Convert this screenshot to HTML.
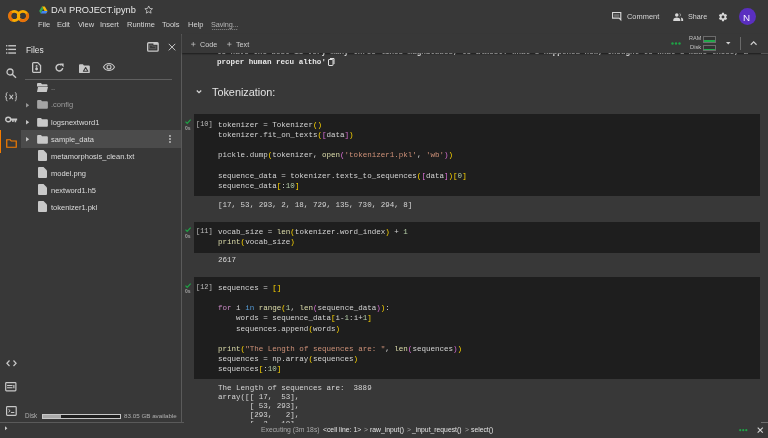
<!DOCTYPE html>
<html><head><meta charset="utf-8">
<style>
*{margin:0;padding:0;box-sizing:border-box}
html,body{width:768px;height:438px;overflow:hidden;background:#383838}
body{position:relative;font-family:"Liberation Sans",sans-serif;color:#e3e3e3}
.a,.code,.out,.pr{will-change:transform}
.a{position:absolute;white-space:pre;line-height:1}
svg{position:absolute;overflow:visible}
.menu{font-size:7.5px;color:#d6d6d6;top:21px}
.cell{position:absolute;left:194px;width:566px;background:#1e1e1e}
.code{position:absolute;left:218.2px;font-family:"Liberation Mono",monospace;font-size:7.54px;line-height:10.13px;color:#d4d4d4;white-space:pre}
.out{position:absolute;left:218.2px;font-family:"Liberation Mono",monospace;font-size:7.54px;line-height:10.13px;color:#d5d5d5;white-space:pre}
.pr{position:absolute;left:195.5px;font-family:"Liberation Mono",monospace;font-size:6.95px;line-height:10.13px;color:#bdbdbd;white-space:pre}
.f{color:#dcdcaa}.s{color:#ce9178}.n{color:#b5cea8}.k{color:#c586c0}.b{color:#569cd6}
.y{color:#ffd700}.p{color:#da70d6}
.fname{font-size:7.5px;left:51px;color:#dcdcdc}
</style></head><body>

<!-- ===== header ===== -->
<svg style="left:0;top:0" width="40" height="32" viewBox="0 0 40 32">
  <circle cx="22.9" cy="15.95" r="4.6" fill="none" stroke="#f9ab00" stroke-width="2.9"/>
  <path d="M26.9 13.6 A4.6 4.6 0 0 1 19.9 19.4" fill="none" stroke="#e8710a" stroke-width="2.9"/>
  <circle cx="14.25" cy="15.95" r="4.6" fill="none" stroke="#f9ab00" stroke-width="2.9"/>
  <path d="M11.8 12.1 A4.6 4.6 0 0 0 12.4 20.2" fill="none" stroke="#e8710a" stroke-width="2.9"/>
</svg>
<svg style="left:38.5px;top:6.3px" width="8.7" height="7.8" viewBox="0 0 10 9">
  <path d="M3.3 0.5 L6.7 0.5 L9.8 5.8 L8.1 8.6 Z" fill="#fbbc04"/>
  <path d="M3.3 0.5 L0.2 5.8 L1.9 8.6 L5 3.2 Z" fill="#34a853"/>
  <path d="M1.9 8.6 L8.1 8.6 L9.8 5.8 L3.6 5.8 Z" fill="#4285f4"/>
</svg>
<div class="a" style="left:51px;top:5.6px;font-size:9.25px;color:#e8e8e8">DAI PROJECT.ipynb</div>
<svg style="left:143.8px;top:5px" width="9.4" height="9.4" viewBox="0 0 24 24"><path d="M12 2.5l2.9 6.3 6.9.7-5.2 4.6 1.5 6.8L12 17.4l-6.1 3.5 1.5-6.8L2.2 9.5l6.9-.7z" fill="none" stroke="#d0d0d0" stroke-width="2"/></svg>

<div class="a menu" style="left:37.7px">File</div>
<div class="a menu" style="left:57px">Edit</div>
<div class="a menu" style="left:77.6px">View</div>
<div class="a menu" style="left:100.4px">Insert</div>
<div class="a menu" style="left:126.9px">Runtime</div>
<div class="a menu" style="left:162.3px">Tools</div>
<div class="a menu" style="left:187.9px">Help</div>
<div class="a menu" style="left:211.2px;font-size:7.3px;top:21.2px;color:#b4b4b4;letter-spacing:-0.1px">Saving...</div>
<div style="position:absolute;left:212px;top:28.9px;width:26.4px;height:0.9px;background:repeating-linear-gradient(90deg,#7a7a7a 0 1.3px,#4a4a4a 1.3px 2px)"></div>

<svg style="left:612.2px;top:12.3px" width="9.4" height="8.4" viewBox="0 0 20 18"><path d="M1.2 1.2h17.6v15.6l-3.6-3.6H1.2z" fill="none" stroke="#d8d8d8" stroke-width="2.4"/><path d="M4.5 5h11M4.5 7.5h11M4.5 10h11" stroke="#9a9a9a" stroke-width="1.2"/></svg>
<div class="a" style="left:626.7px;top:13px;font-size:7.45px;color:#d6d6d6">Comment</div>
<svg style="left:673.2px;top:12.6px" width="10.4" height="8" viewBox="0 0 22 17"><circle cx="8" cy="4.2" r="3.8" fill="#d8d8d8"/><path d="M0.5 17v-2.8c0-3 4.8-4.8 7.5-4.8s7.5 1.8 7.5 4.8V17z" fill="#d8d8d8"/><path d="M13.5 0.6a3.8 3.8 0 0 1 0 7.3A5.5 5.5 0 0 0 13.5 0.6z" fill="#d8d8d8"/><path d="M16.5 9.8c2.8.8 5 2.2 5 4.4V17h-4v-2.8c0-1.7-.4-3.2-1-4.4z" fill="#d8d8d8"/></svg>
<div class="a" style="left:688.2px;top:13px;font-size:7.2px;color:#d6d6d6">Share</div>
<svg style="left:718px;top:11.6px" width="10" height="10" viewBox="0 0 24 24"><path fill="#d8d8d8" d="M19.4 13c.04-.32.06-.66.06-1s-.02-.68-.06-1l2.1-1.65c.2-.15.24-.42.12-.64l-2-3.46c-.12-.22-.39-.3-.61-.22l-2.49 1c-.52-.4-1.08-.73-1.69-.98l-.38-2.65C14.4 2.18 14.2 2 13.96 2h-4c-.25 0-.45.18-.49.42l-.38 2.65c-.61.25-1.17.59-1.69.98l-2.49-1c-.23-.09-.49 0-.61.22l-2 3.46c-.13.22-.07.49.12.64L4.57 11c-.04.32-.07.66-.07 1s.03.68.07 1l-2.11 1.65c-.19.15-.24.42-.12.64l2 3.46c.12.22.39.3.61.22l2.49-1c.52.4 1.08.73 1.69.98l.38 2.65c.03.24.24.42.49.42h4c.25 0 .45-.18.49-.42l.38-2.65c.61-.25 1.17-.59 1.69-.98l2.49 1c.23.09.49 0 .61-.22l2-3.46c.12-.22.07-.49-.12-.64L19.4 13zM12 15.5c-1.93 0-3.5-1.57-3.5-3.5s1.57-3.5 3.5-3.5 3.5 1.57 3.5 3.5-1.57 3.5-3.5 3.5z"/></svg>
<div style="position:absolute;left:738.5px;top:8.4px;width:17px;height:17px;border-radius:50%;background:#5a2fc0"></div>
<div class="a" style="left:743.4px;top:13.1px;font-size:9.8px;color:#f4f0ff">N</div>

<!-- ===== left rail ===== -->
<svg style="left:6.2px;top:44.8px" width="10" height="8.8" viewBox="0 0 22 19"><g fill="#c8c8c8"><rect x="0" y="0" width="3" height="3"/><rect x="0" y="8" width="3" height="3"/><rect x="0" y="16" width="3" height="3"/><rect x="5" y="0" width="17" height="3"/><rect x="5" y="8" width="17" height="3"/><rect x="5" y="16" width="17" height="3"/></g></svg>
<svg style="left:6px;top:68px" width="11" height="10" viewBox="0 0 22 20"><circle cx="8" cy="8" r="6" fill="none" stroke="#c8c8c8" stroke-width="2.6"/><path d="M12.5 12.5L20 19.5" stroke="#c8c8c8" stroke-width="2.8"/></svg>
<svg style="left:5px;top:92px" width="12.4" height="9.4" viewBox="0 0 25 19"><path d="M5 1.2C3 1.2 2.6 2.2 2.6 4v3.2c0 1.4-.6 2.3-1.8 2.3 1.2 0 1.8.9 1.8 2.3V15c0 1.8.4 2.8 2.4 2.8M20 1.2c2 0 2.4 1 2.4 2.8v3.2c0 1.4.6 2.3 1.8 2.3-1.2 0-1.8.9-1.8 2.3V15c0 1.8-.4 2.8-2.4 2.8" fill="none" stroke="#c8c8c8" stroke-width="2"/><path d="M9 5.5l7 9M16.5 5.5l-7.5 9" stroke="#c8c8c8" stroke-width="2.1"/></svg>
<svg style="left:5px;top:116.3px" width="12.4" height="7" viewBox="0 0 25 14"><ellipse cx="6.5" cy="7" rx="5" ry="4.6" fill="none" stroke="#c8c8c8" stroke-width="2.8"/><path d="M11 5.2h13.5v3.6h-2v4h-3v-4h-2v3h-3v-3H11z" fill="#c8c8c8"/></svg>
<div style="position:absolute;left:0;top:129.7px;width:1.2px;height:23.4px;background:#f57c00"></div>
<svg style="left:6px;top:138.5px" width="11" height="9" viewBox="0 0 22 18"><path d="M1.5 1.5h7l2 2.5h10v12.5h-19z" fill="none" stroke="#f57c00" stroke-width="2.4"/></svg>

<svg style="left:5.6px;top:359.5px" width="11" height="6.5" viewBox="0 0 22 13"><path d="M7 1L1.8 6.5 7 12M15 1l5.2 5.5L15 12" fill="none" stroke="#c8c8c8" stroke-width="2.4"/></svg>
<svg style="left:5.2px;top:382px" width="11.6" height="9.4" viewBox="0 0 23 19"><rect x="1.2" y="1.2" width="20.6" height="16.6" rx="1.5" fill="none" stroke="#c8c8c8" stroke-width="2.4"/><rect x="4" y="6" width="11" height="2.2" fill="#c8c8c8"/><rect x="4" y="10.5" width="11" height="2.2" fill="#c8c8c8"/><rect x="16.5" y="6" width="2.4" height="6.7" fill="#c8c8c8"/></svg>
<svg style="left:6px;top:405.5px" width="10.8" height="10" viewBox="0 0 22 20"><rect x="1.2" y="1.2" width="19.6" height="17.6" rx="1.5" fill="none" stroke="#c8c8c8" stroke-width="2.4"/><path d="M5 6.5l3.5 3-3.5 3" fill="none" stroke="#c8c8c8" stroke-width="2"/><rect x="10" y="12" width="7" height="2" fill="#c8c8c8"/></svg>

<!-- ===== files panel ===== -->
<div class="a" style="left:25.6px;top:45.5px;font-size:8.4px;color:#e3e3e3">Files</div>
<svg style="left:147px;top:42.2px" width="11.8" height="9.9" viewBox="0 0 23 19"><rect x="1.3" y="1.3" width="20.4" height="16.4" rx="2" fill="none" stroke="#c8c8c8" stroke-width="2.6"/><rect x="12.5" y="1.3" width="9.2" height="4" fill="#c8c8c8"/><path d="M5 6h5v2h7v5H5z" fill="none" stroke="#6a6a6a" stroke-width="1.4"/></svg>
<svg style="left:168.2px;top:42.8px" width="8" height="8.2" viewBox="0 0 16 16"><path d="M1.5 1.5l13 13M14.5 1.5l-13 13" stroke="#c8c8c8" stroke-width="2"/></svg>

<svg style="left:31.6px;top:62.1px" width="9.2" height="11" viewBox="0 0 18.4 22"><path d="M3 1.3h8.5l5.6 5.6V19a1.7 1.7 0 0 1-1.7 1.7H3A1.7 1.7 0 0 1 1.3 19V3A1.7 1.7 0 0 1 3 1.3z" fill="none" stroke="#c8c8c8" stroke-width="2.6"/><circle cx="9.2" cy="14" r="2.8" fill="#c8c8c8"/><path d="M9.2 12V6.5M6.8 8.8l2.4-2.6 2.4 2.6" fill="none" stroke="#c8c8c8" stroke-width="1.6"/></svg>
<svg style="left:55.1px;top:63px" width="9" height="9" viewBox="0 0 18 18"><path d="M15.3 10A6.6 6.6 0 1 1 12.8 4.2" fill="none" stroke="#c8c8c8" stroke-width="2.9"/><path d="M9.8 1h7.5v7.5z" fill="#c8c8c8"/></svg>
<svg style="left:78.8px;top:63.7px" width="10.8" height="9.4" viewBox="0 0 22 18"><path d="M0 2a2 2 0 0 1 2-2h6l2 2.5h10a2 2 0 0 1 2 2V16a2 2 0 0 1-2 2H2a2 2 0 0 1-2-2z" fill="#c8c8c8"/><path d="M13.5 6.5l4.5 7.8H9z" fill="none" stroke="#383838" stroke-width="2.2" stroke-linejoin="round"/></svg>
<svg style="left:103px;top:63.2px" width="12" height="8" viewBox="0 0 24 16"><path d="M1 8C4 2.5 8 1 12 1s8 1.5 11 7c-3 5.5-7 7-11 7S4 13.5 1 8z" fill="none" stroke="#c8c8c8" stroke-width="2.2"/><circle cx="12" cy="8" r="4" fill="none" stroke="#c8c8c8" stroke-width="2.2"/></svg>

<div style="position:absolute;left:25px;top:78.7px;width:147px;height:0.7px;background:#606060"></div>

<!-- tree -->
<svg style="left:37px;top:83px" width="11" height="9" viewBox="0 0 22 18"><path d="M0 2a2 2 0 0 1 2-2h6l2 2.5h9a2 2 0 0 1 2 2V7H0z" fill="#c8c8c8"/><path d="M2 8h20l-2.5 10H0z" fill="#c8c8c8"/></svg>
<div class="a fname" style="top:83.6px;color:#a8a8a8">..</div>

<svg style="left:26.4px;top:102.6px" width="3.2" height="4.6" viewBox="0 0 4 6"><path d="M0 0l4 3-4 3z" fill="#9a9a9a"/></svg>
<svg style="left:37px;top:100.4px" width="11" height="8.8" viewBox="0 0 22 18"><path d="M0 2a2 2 0 0 1 2-2h6l2 2.5h10a2 2 0 0 1 2 2V16a2 2 0 0 1-2 2H2a2 2 0 0 1-2-2z" fill="#a4a4a4"/></svg>
<div class="a fname" style="top:101.4px;color:#9c9c9c">.config</div>

<svg style="left:26.4px;top:119.7px" width="3.2" height="4.6" viewBox="0 0 4 6"><path d="M0 0l4 3-4 3z" fill="#c8c8c8"/></svg>
<svg style="left:37px;top:117.5px" width="11" height="8.8" viewBox="0 0 22 18"><path d="M0 2a2 2 0 0 1 2-2h6l2 2.5h10a2 2 0 0 1 2 2V16a2 2 0 0 1-2 2H2a2 2 0 0 1-2-2z" fill="#c8c8c8"/></svg>
<div class="a fname" style="top:118.5px">logsnextword1</div>

<div style="position:absolute;left:21px;top:130.2px;width:160px;height:17.4px;background:#4b4b4b"></div>
<svg style="left:26.4px;top:137.2px" width="3.2" height="4.6" viewBox="0 0 4 6"><path d="M0 0l4 3-4 3z" fill="#c8c8c8"/></svg>
<svg style="left:37px;top:135px" width="11" height="8.8" viewBox="0 0 22 18"><path d="M0 2a2 2 0 0 1 2-2h6l2 2.5h10a2 2 0 0 1 2 2V16a2 2 0 0 1-2 2H2a2 2 0 0 1-2-2z" fill="#c8c8c8"/></svg>
<div class="a fname" style="top:136.0px">sample_data</div>
<svg style="left:168.8px;top:135px" width="2" height="8" viewBox="0 0 2 8"><circle cx="1" cy="1" r="0.9" fill="#c8c8c8"/><circle cx="1" cy="4" r="0.9" fill="#c8c8c8"/><circle cx="1" cy="7" r="0.9" fill="#c8c8c8"/></svg>

<svg style="left:38px;top:150px" width="9" height="11.2" viewBox="0 0 18 22"><path d="M2 0h9l7 7v13a2 2 0 0 1-2 2H2a2 2 0 0 1-2-2V2a2 2 0 0 1 2-2z" fill="#c8c8c8"/></svg>
<div class="a fname" style="top:152.9px">metamorphosis_clean.txt</div>
<svg style="left:38px;top:167px" width="9" height="11.2" viewBox="0 0 18 22"><path d="M2 0h9l7 7v13a2 2 0 0 1-2 2H2a2 2 0 0 1-2-2V2a2 2 0 0 1 2-2z" fill="#c8c8c8"/></svg>
<div class="a fname" style="top:169.9px">model.png</div>
<svg style="left:38px;top:184px" width="9" height="11.2" viewBox="0 0 18 22"><path d="M2 0h9l7 7v13a2 2 0 0 1-2 2H2a2 2 0 0 1-2-2V2a2 2 0 0 1 2-2z" fill="#c8c8c8"/></svg>
<div class="a fname" style="top:186.9px">nextword1.h5</div>
<svg style="left:38px;top:201px" width="9" height="11.2" viewBox="0 0 18 22"><path d="M2 0h9l7 7v13a2 2 0 0 1-2 2H2a2 2 0 0 1-2-2V2a2 2 0 0 1 2-2z" fill="#c8c8c8"/></svg>
<div class="a fname" style="top:203.9px">tokenizer1.pkl</div>

<!-- disk -->
<div class="a" style="left:25.4px;top:412.5px;font-size:6.3px;color:#b0b0b0">Disk</div>
<div style="position:absolute;left:42px;top:413.6px;width:78.6px;height:5.5px;border:1px solid #c8c8c8;background:#1e1e1e"></div>
<div style="position:absolute;left:43px;top:414.6px;width:18px;height:3.5px;background:#a8a8a8"></div>
<div class="a" style="left:123.7px;top:412.5px;font-size:6.26px;color:#b0b0b0">83.05 GB available</div>

<!-- dividers -->
<div style="position:absolute;left:181px;top:34px;width:1px;height:388px;background:#5a5a5a"></div>
<div style="position:absolute;left:0;top:422px;width:183.5px;height:1px;background:#5a5a5a"></div>
<svg style="left:5px;top:425.6px" width="2.4" height="4.6" viewBox="0 0 3 5"><path d="M0 0l3 2.5-3 2.5z" fill="#c8c8c8"/></svg>

<!-- ===== notebook ===== -->
<!-- markdown cut text -->
<div class="a" style="left:217.4px;top:48.1px;font-family:'Liberation Mono',monospace;font-weight:bold;font-size:7.57px;color:#e8e8e8;line-height:9px">to have the best is very many three lines magnitudes, to almost. What's happened now, thought to what's made those, a</div>
<div class="a" style="left:217.4px;top:57.5px;font-family:'Liberation Mono',monospace;font-weight:bold;font-size:7.57px;color:#e8e8e8;line-height:9px">proper human recu altho'</div>
<svg style="left:327.6px;top:58px" width="7" height="8" viewBox="0 0 14 16"><rect x="1" y="3" width="9" height="12" rx="1" fill="none" stroke="#e0e0e0" stroke-width="2"/><path d="M4 1h8v11" fill="none" stroke="#e0e0e0" stroke-width="2"/></svg>

<!-- toolbar -->
<div style="position:absolute;left:182px;top:34px;width:586px;height:19px;background:#383838;box-shadow:0 1px 1.5px rgba(0,0,0,.5)"></div>
<svg style="left:191px;top:41.6px" width="4.6" height="4.4" viewBox="0 0 10 10"><path d="M5 0v10M0 5h10" stroke="#c4c4c4" stroke-width="1.6"/></svg>
<div class="a" style="left:199.7px;top:41.1px;font-size:7.2px;color:#d0d0d0">Code</div>
<svg style="left:226.6px;top:41.6px" width="4.6" height="4.4" viewBox="0 0 10 10"><path d="M5 0v10M0 5h10" stroke="#c4c4c4" stroke-width="1.6"/></svg>
<div class="a" style="left:235.5px;top:41.1px;font-size:7.2px;color:#d0d0d0">Text</div>
<svg style="left:671px;top:42px" width="10" height="3" viewBox="0 0 10 3"><circle cx="1.5" cy="1.5" r="1.2" fill="#1ea446"/><circle cx="5" cy="1.5" r="1.2" fill="#1ea446"/><circle cx="8.5" cy="1.5" r="1.2" fill="#1ea446"/></svg>
<div class="a" style="left:688.9px;top:35.9px;font-size:5.5px;color:#c0c0c0">RAM</div>
<div class="a" style="left:690px;top:45.1px;font-size:5.8px;color:#c0c0c0">Disk</div>
<div style="position:absolute;left:703.2px;top:36.3px;width:12.4px;height:6.5px;border:0.7px solid #6c6c6c;background:#333"><div style="position:absolute;left:0;right:0;bottom:0.3px;height:1.1px;background:#22a84a"></div></div>
<div style="position:absolute;left:703.2px;top:45.2px;width:12.4px;height:5.8px;border:0.7px solid #6c6c6c;background:#333"><div style="position:absolute;left:0;right:0;bottom:0.3px;height:1.1px;background:#22a84a"></div></div>
<svg style="left:725.8px;top:42.3px" width="4.5" height="2.5" viewBox="0 0 4.5 2.5"><path d="M0 0h4.5L2.25 2.5z" fill="#d0d0d0"/></svg>
<div style="position:absolute;left:740px;top:37px;width:0.8px;height:13.4px;background:#6a6a6a"></div>
<svg style="left:750px;top:41px" width="7.3" height="4.4" viewBox="0 0 8 5"><path d="M0.7 4.3L4 1 7.3 4.3" fill="none" stroke="#d0d0d0" stroke-width="1.3"/></svg>

<!-- heading -->
<svg style="left:196px;top:90px" width="6" height="3" viewBox="0 0 6 3.4"><path d="M0.5 0.5L3 3 5.5 0.5" fill="none" stroke="#d4d4d4" stroke-width="1.45"/></svg>
<div class="a" style="left:212.2px;top:86.5px;font-size:10.85px;color:#e3e3e3">Tokenization:</div>

<!-- cell 1 -->
<div class="cell" style="top:114.2px;height:81.5px"></div>
<svg style="left:184.6px;top:119.2px" width="6" height="5" viewBox="0 0 6 5"><path d="M0.5 2.6l1.7 1.7L5.6 0.6" fill="none" stroke="#1ea446" stroke-width="1.2"/></svg>
<div class="a" style="left:184.9px;top:125.6px;font-size:5px;font-weight:bold;color:#a0a0a0">0s</div>
<div class="pr" style="top:119.1px">[10]</div>
<div class="code" style="top:120.2px">tokenizer = Tokenizer<span class="y">()</span>
tokenizer.fit_on_texts<span class="y">(</span><span class="p">[</span>data<span class="p">]</span><span class="y">)</span>

pickle.dump<span class="y">(</span>tokenizer, <span class="f">open</span><span class="p">(</span><span class="s">'tokenizer1.pkl'</span>, <span class="s">'wb'</span><span class="p">)</span><span class="y">)</span>

sequence_data = tokenizer.texts_to_sequences<span class="y">(</span><span class="p">[</span>data<span class="p">]</span><span class="y">)</span><span class="y">[</span><span class="n">0</span><span class="y">]</span>
sequence_data<span class="y">[</span>:<span class="n">10</span><span class="y">]</span></div>
<div class="out" style="top:199.9px">[17, 53, 293, 2, 18, 729, 135, 730, 294, 8]</div>

<!-- cell 2 -->
<div class="cell" style="top:222px;height:31px"></div>
<svg style="left:184.6px;top:227.2px" width="6" height="5" viewBox="0 0 6 5"><path d="M0.5 2.6l1.7 1.7L5.6 0.6" fill="none" stroke="#1ea446" stroke-width="1.2"/></svg>
<div class="a" style="left:184.9px;top:233.6px;font-size:5px;font-weight:bold;color:#a0a0a0">0s</div>
<div class="pr" style="top:226.1px">[11]</div>
<div class="code" style="top:227.2px">vocab_size = <span class="f">len</span><span class="y">(</span>tokenizer.word_index<span class="y">)</span> + <span class="n">1</span>
<span class="f">print</span><span class="y">(</span>vocab_size<span class="y">)</span></div>
<div class="out" style="top:254.8px">2617</div>

<!-- cell 3 -->
<div class="cell" style="top:277px;height:101.6px"></div>
<svg style="left:184.6px;top:282.7px" width="6" height="5" viewBox="0 0 6 5"><path d="M0.5 2.6l1.7 1.7L5.6 0.6" fill="none" stroke="#1ea446" stroke-width="1.2"/></svg>
<div class="a" style="left:184.9px;top:289.1px;font-size:5px;font-weight:bold;color:#a0a0a0">0s</div>
<div class="pr" style="top:281.7px">[12]</div>
<div class="code" style="top:282.8px">sequences = <span class="y">[]</span>

<span class="k">for</span> i <span class="b">in</span> <span class="f">range</span><span class="y">(</span><span class="n">1</span>, <span class="f">len</span><span class="p">(</span>sequence_data<span class="p">)</span><span class="y">)</span>:
    words = sequence_data<span class="y">[</span>i-<span class="n">1</span>:i+<span class="n">1</span><span class="y">]</span>
    sequences.append<span class="y">(</span>words<span class="y">)</span>

<span class="f">print</span><span class="y">(</span><span class="s">"The Length of sequences are: "</span>, <span class="f">len</span><span class="p">(</span>sequences<span class="p">)</span><span class="y">)</span>
sequences = np.array<span class="y">(</span>sequences<span class="y">)</span>
sequences<span class="y">[</span>:<span class="n">10</span><span class="y">]</span></div>
<div class="out" style="top:384.1px;line-height:8.95px">The Length of sequences are:  3889
array([[ 17,  53],
       [ 53, 293],
       [293,   2],
       [  2,  18],</div>

<!-- status bar -->
<div style="position:absolute;left:182px;top:422.5px;width:586px;height:16px;background:#383838"></div>
<div class="a" style="left:260.5px;top:426.9px;font-size:6.8px;color:#a8a8a8">Executing (3m 18s)</div>
<div class="a" style="left:323px;top:426.9px;font-size:6.8px;color:#e3e3e3">&lt;cell line: 1&gt;</div>
<div class="a" style="left:364.2px;top:426.9px;font-size:6.8px;color:#a8a8a8">&gt;</div>
<div class="a" style="left:369.8px;top:426.9px;font-size:6.8px;color:#e3e3e3">raw_input()</div>
<div class="a" style="left:406.5px;top:426.9px;font-size:6.8px;color:#a8a8a8">&gt;</div>
<div class="a" style="left:412.2px;top:426.9px;font-size:6.8px;color:#e3e3e3">_input_request()</div>
<div class="a" style="left:465.1px;top:426.9px;font-size:6.8px;color:#a8a8a8">&gt;</div>
<div class="a" style="left:470.8px;top:426.9px;font-size:6.8px;color:#e3e3e3">select()</div>
<svg style="left:739px;top:428.8px" width="8.5" height="2.4" viewBox="0 0 8.5 2.4"><circle cx="1.2" cy="1.2" r="1.1" fill="#1ea446"/><circle cx="4.25" cy="1.2" r="1.1" fill="#1ea446"/><circle cx="7.3" cy="1.2" r="1.1" fill="#1ea446"/></svg>
<svg style="left:757.1px;top:426.8px" width="6.5" height="6.3" viewBox="0 0 16 16"><path d="M1.5 1.5l13 13M14.5 1.5l-13 13" stroke="#d4d4d4" stroke-width="2.8"/></svg>
<div style="position:absolute;left:761px;top:421.8px;width:7px;height:0.8px;background:#6e6e6e"></div>
<div style="position:absolute;left:761px;top:53px;width:7px;height:1px;background:#555"></div>

</body></html>
